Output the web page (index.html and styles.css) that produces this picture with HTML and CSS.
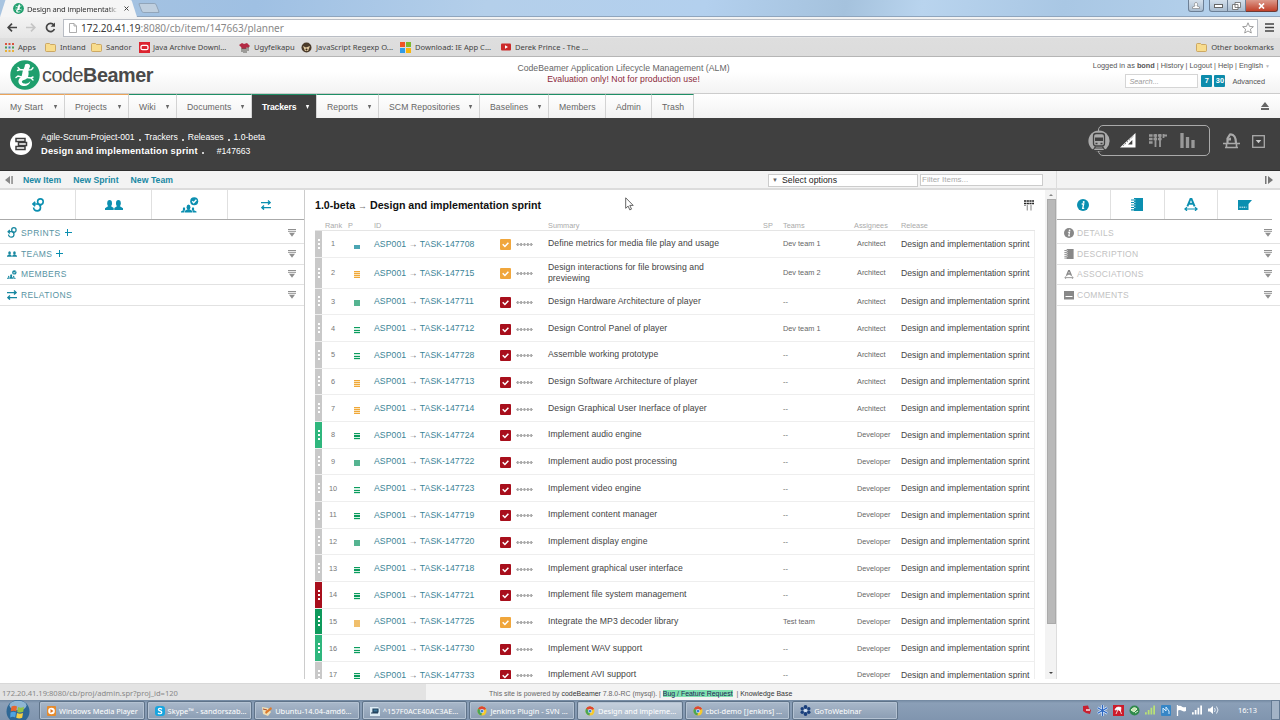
FILE: index.html
```html
<!DOCTYPE html>
<html lang="en">
<head>
    <meta charset="UTF-8">
    <meta name="viewport" content="width=device-width, initial-scale=1.0">
    <title>Design and implementation sprint - codeBeamer</title>
    <link rel="stylesheet" href="styles.css">
</head>
<body>
    <!-- shared icons -->
    <svg class="sprite" width="0" height="0">
        <symbol id="i-lizard" viewBox="0 0 30 30">
            <circle cx="15" cy="15" r="14.7" fill="#1f9f6d"/>
            <path d="M15 4.500c2-1.500 5-.5 5 1.500 0 2.500-2 3-1.500 6 .5 4-1 7-4.500 8-3 .8-2.500 3 0 3.500 3 .5 5-.5 6.500-2.500-1 4-4 5.500-7.500 5-5-.8-6-6-2.500-8.500 1.500-1.300 1.500-3 2-5.500.6-3 2.500-4.500 2.500-7.500z" fill="#fff"/>
            <path d="M14 10l-4-.5-2-2M10 9.500L7.500 10.500M18 10l3.500-.3L23 7.800M11.500 17L8 16l-2 1.500M17 17.500l4 .5 2 2M21 18l2-1" fill="none" stroke="#fff" stroke-width="1.400" stroke-linecap="round"/>
        </symbol>
        <symbol id="i-sprint" viewBox="0 0 12 14">
            <circle cx="8.400" cy="3.700" r="2.800" fill="none" stroke="currentColor" stroke-width="1.600"/>
            <path d="M.8 6h4.500c4 0 4.500 6.700 0 6.900-2.500 0-3.700-1.500-3.700-3.300M3.200 3.800L1 6l2.200 2.200M7.500 6.500l1.800 1.500" fill="none" stroke="currentColor" stroke-width="1.600"/>
        </symbol>
        <symbol id="i-team" viewBox="0 0 18 10">
            <g fill="currentColor"><ellipse cx="4.600" cy="3.200" rx="2.400" ry="3.200"/><path d="M0 10V8.200L3.400 6h2.400L8.700 8v2z"/><ellipse cx="13.400" cy="3.200" rx="2.400" ry="3.200"/><path d="M9.300 10V8l2.900-2h2.400L18 8.200V10z"/></g>
        </symbol>
        <symbol id="i-members" viewBox="0 0 18 16">
            <g fill="currentColor"><ellipse cx="7.500" cy="10.200" rx="1.900" ry="2.700"/><path d="M4 15.500v-1.700l2.500-1.600h2l2.500 1.600v1.700z"/><ellipse cx="3" cy="12" rx="1.200" ry="1.700"/><path d="M0 15.500v-1l2-1.200h1.500v2.200z"/><ellipse cx="12" cy="12" rx="1.200" ry="1.700"/><path d="M11.500 15.500v-2.200H13l2.500 1.200v1z"/></g>
            <circle cx="13.200" cy="4.200" r="4" fill="currentColor"/>
            <path d="M11.200 4.200l1.500 1.600 2.700-3" fill="none" stroke="#fff" stroke-width="1.300"/>
        </symbol>
        <symbol id="i-relations" viewBox="0 0 10 10">
            <path d="M0 2.600h9M7 .6l2.200 2L7 4.600M10 7.600H1M3 5.600L.8 7.600l2.200 2" fill="none" stroke="currentColor" stroke-width="1.400"/>
        </symbol>
        <symbol id="i-info" viewBox="0 0 12 12">
            <circle cx="6" cy="6" r="6" fill="currentColor"/>
            <circle cx="6.700" cy="2.900" r="1" fill="#fff"/>
            <path d="M4.700 5h2L5.700 9.300h1.500" fill="none" stroke="#fff" stroke-width="1.300"/>
        </symbol>
        <symbol id="i-book" viewBox="0 0 12 13">
            <path d="M3 0h9v13H3z" fill="currentColor"/>
            <path d="M0 2h4M0 4.500h4M0 7h4M0 9.500h4M0 11.800h4" stroke="currentColor" stroke-width="1.200"/>
            <path d="M3 1.900h1.500M3 4.400h1.500M3 6.900h1.500M3 9.400h1.500" stroke="#fff" stroke-width=".7"/>
        </symbol>
        <symbol id="i-assoc" viewBox="0 0 14 13">
            <path d="M3.400 8.300L6.500.9h1l3.100 7.400M4.600 5.800h4.800" fill="none" stroke="currentColor" stroke-width="1.900"/>
            <path d="M1.500 11h11M3 9.200L.8 11 3 12.800M11 9.200l2.200 1.800L11 12.800" fill="none" stroke="currentColor" stroke-width="1.200"/>
        </symbol>
        <symbol id="i-comment" viewBox="0 0 14 10">
            <path d="M0 0h14l-3.500 4V10H0z" fill="currentColor"/>
            <path d="M1.500 7.200h7" stroke="#fff" stroke-width="1" stroke-dasharray="1.300 .8"/>
        </symbol>
        <symbol id="i-note" viewBox="0 0 10 9">
            <path d="M0 0h10v8.500H0z" fill="currentColor"/><path d="M1.500 5.500h7" stroke="#fff"/>
        </symbol>
        <symbol id="i-collapse" viewBox="0 0 8 8">
            <path d="M0 .5h8M0 2.300h8" stroke="currentColor" stroke-width="1"/><path d="M1 3.800h6L4 7.700z" fill="currentColor"/>
        </symbol>
        <symbol id="i-check" viewBox="0 0 11 11">
            <rect width="11" height="11" rx="1" fill="currentColor"/><path d="M2.700 5.300L4.900 7.500 8.400 3.700" fill="none" stroke="#fff" stroke-width="1.500"/>
        </symbol>
        <symbol id="i-folder" viewBox="0 0 11 9">
            <path d="M.5 1.500q0-1 1-1h3l1 1h4q1 0 1 1v5q0 1-1 1h-8q-1 0-1-1z" fill="#f8dc8d" stroke="#c49a4e" stroke-width=".8"/>
        </symbol>
        <symbol id="i-chrome" viewBox="0 0 20 20">
            <circle cx="10" cy="10" r="9" fill="#f5c92e"/><path d="M10 10L2.200 5.500A9 9 0 0 1 18 6z" fill="#dc4735"/><path d="M10 10L2.200 5.500A9 9 0 0 0 9 19z" fill="#48a554"/>
            <path d="M9 6h9.100A9 9 0 0 0 2.200 5.500z" fill="#dc4735"/><circle cx="10" cy="10" r="4.200" fill="#fff"/><circle cx="10" cy="10" r="3.200" fill="#3f7fd6"/>
        </symbol>
        <symbol id="i-bars" viewBox="0 0 10 9">
            <path d="M0 8.500V6.500h1.600v2zM2.500 8.500v-4h1.600v4zM5 8.500v-6h1.600v6zM7.500 8.500v-8h1.600v8z" fill="currentColor"/>
        </symbol>
    </svg>

    <div class="browser">
        <div class="titlebar">
            <div class="tab">
                <svg width="11" height="11"><use href="#i-lizard"/></svg>
                <span class="tab-title">Design and implementatic</span>
                <svg width="5" height="5" viewBox="0 0 5 5"><path d="M.5.5l4 4M4.500.5l-4 4" stroke="#444"/></svg>
            </div>
            <div class="new-tab"></div>
            <div class="window-buttons">
                <span class="win-btn user"><svg width="8" height="7" viewBox="0 0 8 7"><path d="M.5 6.500V5L3 4C2 2 2.500.5 4 .5S6 2 5 4l2.500 1v1.500z" fill="#fff" stroke="#777" stroke-width=".6"/></svg></span>
                <span class="win-btn min"><svg width="9" height="4"><rect x=".5" y=".5" width="8" height="3" fill="#fff" stroke="#666"/></svg></span>
                <span class="win-btn max"><svg width="9" height="8" viewBox="0 0 9 8"><path d="M3 .5h5.500v5H3zM.5 2.500H6v5H.5z" fill="#fff" stroke="#666" stroke-width=".8"/></svg></span>
                <span class="win-btn close"><svg width="7" height="6" viewBox="0 0 7 6"><path d="M1 .5l5 5M6 .5l-5 5" stroke="#fff" stroke-width="1.700"/></svg></span>
            </div>
        </div>

        <div class="toolbar">
            <svg width="10" height="9" viewBox="0 0 10 9"><path d="M10 4.500H1.500M5 .7L1.200 4.500 5 8.300" fill="none" stroke="#444" stroke-width="1.700"/></svg>
            <svg width="10" height="9" viewBox="0 0 10 9"><path d="M0 4.500h8.500M5 .7l3.800 3.800L5 8.300" fill="none" stroke="#c5c5c5" stroke-width="1.700"/></svg>
            <svg width="11" height="11" viewBox="0 0 11 11"><path d="M8.800 3A4.100 4.100 0 1 0 9.400 7" fill="none" stroke="#444" stroke-width="1.700"/><path d="M10 .5v4.200H5.700z" fill="#444"/></svg>
            <div class="address">
                <svg width="8" height="10" viewBox="0 0 8 10"><path d="M.5.5h4.500l2.500 2.500v6.500h-7zM5 .5V3h2.500" fill="#fff" stroke="#999" stroke-width=".8"/></svg>
                <span class="url"><b>172.20.41.19</b>:8080/cb/item/147663/planner</span>
                <svg width="12" height="12" viewBox="0 0 12 12"><path d="M6 .8l1.500 3.600 3.900.3-3 2.500.9 3.800L6 9l-3.300 2 .9-3.800-3-2.500 3.900-.3z" fill="#fff" stroke="#888" stroke-width=".8"/></svg>
            </div>
            <svg width="9" height="9" viewBox="0 0 9 9"><path d="M0 1h9M0 4.500h9M0 8h9" stroke="#444" stroke-width="1.600"/></svg>
        </div>

        <div class="bookmarks">
            <div class="bookmark"><svg width="9" height="9" viewBox="0 0 9 9"><path d="M0 1h2M3.500 1h2M7 1h2" stroke="#d8523d" stroke-width="2"/><path d="M0 4.500h2M7 4.500h2" stroke="#4b9c57" stroke-width="2"/><path d="M3.500 4.500h2" stroke="#3f78c8" stroke-width="2"/><path d="M0 8h2M3.500 8h2M7 8h2" stroke="#e9b03a" stroke-width="2"/></svg>Apps</div>
            <div class="bookmark"><svg width="11" height="9"><use href="#i-folder"/></svg>Intland</div>
            <div class="bookmark"><svg width="11" height="9"><use href="#i-folder"/></svg>Sandor</div>
            <div class="bookmark"><svg width="11" height="11" viewBox="0 0 11 11"><rect width="11" height="11" fill="#dc2430"/><rect x="2" y="3.300" width="7" height="4.400" rx="1.500" fill="none" stroke="#fff" stroke-width="1.300"/></svg>Java Archive Downl...</div>
            <div class="bookmark"><svg width="11" height="11" viewBox="0 0 11 11"><path d="M0 3l3-2 2 1 3-1 3 3-2 2-1-1-1 2H3L2 5z" fill="#b32b45"/><path d="M3 6v4M5 6v5M7 6v5M9 5v4" stroke="#5d5a55"/></svg>Ugyfelkapu</div>
            <div class="bookmark"><svg width="11" height="11" viewBox="0 0 11 11"><circle cx="5.500" cy="5.500" r="5" fill="#4a3a2a"/><path d="M2 4l3 1.500L9 4 7 9H4z" fill="#e0c9a0"/><circle cx="5.500" cy="7.500" r="1" fill="#3a2a1a"/></svg>JavaScript Regexp O...</div>
            <div class="bookmark"><svg width="11" height="11" viewBox="0 0 11 11"><path d="M0 0h5v5H0z" fill="#f05325"/><path d="M6 0h5v5H6z" fill="#7eb72d"/><path d="M0 6h5v5H0z" fill="#2f9be8"/><path d="M6 6h5v5H6z" fill="#f7b50c"/></svg>Download: IE App C...</div>
            <div class="bookmark"><svg width="10" height="8" viewBox="0 0 10 8"><rect y=".5" width="10" height="7" rx="1" fill="#cc2a2a"/><path d="M4 2.300L7 4 4 5.700z" fill="#fff"/></svg>Derek Prince - The ...</div>
            <div class="bookmark other"><svg width="11" height="9"><use href="#i-folder"/></svg>Other bookmarks</div>
        </div>
    </div>

    <header class="header">
        <div class="logo">
            <svg width="30" height="30"><use href="#i-lizard"/></svg>
            <span class="logo-text">code<b>Beamer</b></span>
        </div>
        <div class="license">
            <div>CodeBeamer Application Lifecycle Management (ALM)</div>
            <div class="evaluation">Evaluation only! Not for production use!</div>
        </div>
        <div class="user-area">
            <div class="user-links">Logged in as <b>bond</b> | History | Logout | Help | English <i>▼</i></div>
            <div class="search-row">
                <div class="search-box">Search...</div>
                <span class="day">7</span>
                <span class="day">30</span>
                <span class="advanced">Advanced</span>
            </div>
        </div>
    </header>

    <nav class="nav">
        <div class="nav-item orange">My Start<i>▼</i></div>
        <div class="nav-item orange">Projects<i>▼</i></div>
        <div class="nav-item">Wiki<i>▼</i></div>
        <div class="nav-item">Documents<i>▼</i></div>
        <div class="nav-item active">Trackers<i>▼</i></div>
        <div class="nav-item">Reports<i>▼</i></div>
        <div class="nav-item">SCM Repositories<i>▼</i></div>
        <div class="nav-item">Baselines<i>▼</i></div>
        <div class="nav-item">Members</div>
        <div class="nav-item">Admin</div>
        <div class="nav-item">Trash</div>
        <svg class="eject" width="8" height="8" viewBox="0 0 8 8"><path d="M4 0l4 5H0zM0 6h8v2H0z" fill="#666"/></svg>
    </nav>

    <div class="titlebar-dark">
        <svg width="22" height="22" viewBox="0 0 22 22"><circle cx="11" cy="11" r="11" fill="#fff"/><path d="M6 5.500h9v3H6zM8.500 9.500h8v3h-8zM6 13.500h9v3H6z" fill="#fff" stroke="#3d3d3d" stroke-width="1.500"/></svg>
        <div class="crumbs">
            <div class="crumb-path">Agile-Scrum-Project-001<i></i>Trackers<i></i>Releases<i></i>1.0-beta</div>
            <div class="crumb-title"><b>Design and implementation sprint</b><i></i><span>#147663</span></div>
        </div>
        <div class="views">
            <svg class="train" width="22" height="22" viewBox="0 0 22 22"><circle cx="11" cy="11" r="10.600" fill="#aaa"/><rect x="5.500" y="3.500" width="11" height="12.500" rx="2.500" fill="#aaa" stroke="#404040" stroke-width="1.300"/><path d="M7 7.500h8v3.500H7z" fill="#404040"/><path d="M7.500 16.500L4 22M14.500 16.500L18 22M7 18h8M6 20.500h10" stroke="#404040" stroke-width="1.200"/><path d="M7.500 13.500h2M12.500 13.500h2" stroke="#404040" stroke-width="1.500"/></svg>
            <svg width="16" height="15" viewBox="0 0 16 15"><path d="M15.500 0v14.500H0z" fill="#fff"/><path d="M12.300 7v4.500H8z" fill="#404040"/><path d="M3.500 12.500L13.500 3" stroke="#404040" stroke-dasharray="1 1.500"/></svg>
            <svg width="18" height="13" viewBox="0 0 18 13"><path d="M0 1.500h13M0 5h13M0 8.500h4" stroke="#999" stroke-width="2.300" stroke-dasharray="3.600 .9"/><path d="M6.500 0v13M11 0v13M14 1.500h4M14.500 0v4" stroke="#999" stroke-width="1.800"/></svg>
            <svg width="15" height="15" viewBox="0 0 15 15"><path d="M2 0v15M7.500 4v11M13 7v8" stroke="#999" stroke-width="3.300"/></svg>
        </div>
        <svg class="stamp" width="17" height="16" viewBox="0 0 17 16"><path d="M4.500 10V5.500L7 1.500c4-.5 6 3 6 8.500" fill="none" stroke="#aaa" stroke-width="2.200"/><path d="M5 5.500l3-1v3H5z" fill="#aaa"/><path d="M0 10.500h17M2 14.500h13M3.500 11v4M13.500 11v4" stroke="#aaa" stroke-width="1.600"/></svg>
        <svg width="13" height="13" viewBox="0 0 13 13"><rect x=".7" y=".7" width="11.600" height="11.600" fill="none" stroke="#aaa" stroke-width="1.300"/><path d="M3.700 5h5.600L6.500 8.300z" fill="#ccc"/></svg>
    </div>

    <div class="actionbar">
        <svg width="8" height="8" viewBox="0 0 8 8"><path d="M5 0v8L0 4zM6.300 0h1.500v8H6.300z" fill="#888"/></svg>
        <a>New Item</a>
        <a>New Sprint</a>
        <a>New Team</a>
        <div class="select-box"><i>▼</i>Select options</div>
        <div class="filter-box">Filter Items...</div>
        <div class="right-toggle"><svg width="8" height="8" viewBox="0 0 8 8"><path d="M0 0h1.500v8H0zM3 0l5 4-5 4z" fill="#777"/></svg></div>
    </div>

    <main class="main">
        <aside class="left">
            <div class="icon-tabs">
                <span><svg width="12" height="14"><use href="#i-sprint"/></svg></span>
                <span><svg width="18" height="10"><use href="#i-team"/></svg></span>
                <span><svg width="18" height="16"><use href="#i-members"/></svg></span>
                <span><svg width="10" height="10"><use href="#i-relations"/></svg></span>
            </div>
            <div class="section"><svg width="10" height="11"><use href="#i-sprint"/></svg>SPRINTS<b class="plus"></b><svg class="toggle" width="8" height="8"><use href="#i-collapse"/></svg></div>
            <div class="section"><svg width="10" height="6"><use href="#i-team"/></svg>TEAMS<b class="plus"></b><svg class="toggle" width="8" height="8"><use href="#i-collapse"/></svg></div>
            <div class="section"><svg width="10" height="9"><use href="#i-members"/></svg>MEMBERS<svg class="toggle" width="8" height="8"><use href="#i-collapse"/></svg></div>
            <div class="section"><svg width="10" height="10"><use href="#i-relations"/></svg>RELATIONS<svg class="toggle" width="8" height="8"><use href="#i-collapse"/></svg></div>
        </aside>

        <section class="center">
            <div class="center-head">
                <h1>1.0-beta <span>→</span> Design and implementation sprint</h1>
                <svg width="10" height="11" viewBox="0 0 10 11"><path d="M0 1h10M0 3.500h10" stroke="#222" stroke-width="1.500" stroke-dasharray="2.200 .5"/><path d="M3.300 5v5.500M7 5v5.500M0 5.500h2" stroke="#999" stroke-width="1.200"/></svg>
            </div>
            <div class="row columns">
                <span></span><span>Rank</span><span>P</span><span>ID</span><span></span><span></span><span>Summary</span><span>SP</span><span>Teams</span><span>Assignees</span><span>Release</span>
            </div>
            <div class="rows" id="rows"></div>
        </section>

        <div class="scrollbar">
            <i class="up"></i>
            <div class="thumb"></div>
            <i class="down"></i>
        </div>

        <aside class="right">
            <div class="icon-tabs">
                <span><svg width="12" height="12"><use href="#i-info"/></svg></span>
                <span><svg width="12" height="13"><use href="#i-book"/></svg></span>
                <span><svg width="14" height="13"><use href="#i-assoc"/></svg></span>
                <span><svg width="14" height="10"><use href="#i-comment"/></svg></span>
            </div>
            <div class="section"><svg width="10" height="10"><use href="#i-info"/></svg>DETAILS<svg class="toggle" width="8" height="8"><use href="#i-collapse"/></svg></div>
            <div class="section"><svg width="10" height="10"><use href="#i-book"/></svg>DESCRIPTION<svg class="toggle" width="8" height="8"><use href="#i-collapse"/></svg></div>
            <div class="section"><svg width="10" height="9"><use href="#i-assoc"/></svg>ASSOCIATIONS<svg class="toggle" width="8" height="8"><use href="#i-collapse"/></svg></div>
            <div class="section"><svg width="10" height="9"><use href="#i-note"/></svg>COMMENTS<svg class="toggle" width="8" height="8"><use href="#i-collapse"/></svg></div>
        </aside>
    </main>

    <footer class="footer">
        <div class="status-url">172.20.41.19:8080/cb/proj/admin.spr?proj_id=120</div>
        <div class="powered">This site is powered by <b>codeBeamer</b> 7.8.0-RC (mysql). | <mark>Bug / Feature Request</mark> &nbsp;| <b>Knowledge Base</b></div>
    </footer>

    <div class="taskbar">
        <svg class="start" width="24" height="20" viewBox="0 0 24 20">
            <circle cx="12" cy="11.500" r="11.500" fill="#2e6795"/><ellipse cx="12" cy="5.500" rx="8.500" ry="4.800" fill="#8fb6d3"/>
            <path d="M5.500 6.500q3-1.500 5.500 0l-.8 5q-2.500-1.300-5.500 0z" fill="#e5672f"/><path d="M12 7q3 1.500 6-.3l-.8 5q-3 1.500-6 .2z" fill="#93c344"/><path d="M4.500 12.500q3-1.300 5.500 0l-.8 5q-2.500-1.300-5 0z" fill="#4fa3df"/><path d="M11 13q3 1.500 6 0l-.8 4.700q-3 1.500-6 0z" fill="#f6cf43"/>
        </svg>
        <div class="tasks">
            <div class="task"><svg width="9" height="10" viewBox="0 0 9 10"><rect width="9" height="10" rx="1" fill="#e58b2e"/><circle cx="4.500" cy="5" r="3.300" fill="#fff"/><path d="M3.500 3l3 2-3 2z" fill="#e0701a"/></svg>Windows Media Player</div>
            <div class="task"><svg width="10" height="10" viewBox="0 0 10 10"><rect width="10" height="10" rx="3" fill="#18a5df"/><path d="M7 3.300C6 2 3.200 2.200 3.400 3.700 3.600 5.100 6.800 4.700 6.800 6.300 6.800 8 4 8.200 3 6.800" fill="none" stroke="#fff" stroke-width="1.200"/></svg>Skype™ - sandorszab...</div>
            <div class="task"><svg width="10" height="10" viewBox="0 0 10 10"><path d="M0 1l6 1 3 4-3 4-5-2z" fill="#f0dfb5"/><path d="M3 6l6-5 1 2-6 5z" fill="#dc7a2c"/><path d="M1 3l4 1" stroke="#a84a28"/></svg>Ubuntu-14.04-amd6...</div>
            <div class="task"><svg width="10" height="10" viewBox="0 0 10 10"><path d="M0 1h8l2 2v7H0z" fill="#dcebf4"/><path d="M1 7h7M3 3h5v3H3z" stroke="#23435e" stroke-width="1.200" fill="#3b7598"/></svg>^157F0ACE40AC3AE...</div>
            <div class="task"><svg width="10" height="10"><use href="#i-chrome"/></svg>Jenkins Plugin - SVN ...</div>
            <div class="task current"><svg width="10" height="10"><use href="#i-chrome"/></svg>Design and impleme...</div>
            <div class="task"><svg width="10" height="10"><use href="#i-chrome"/></svg>cbci-demo [Jenkins] ...</div>
            <div class="task"><svg width="11" height="11" viewBox="0 0 11 11"><circle cx="5.500" cy="5.500" r="1.600" fill="#cfe0f5"/><g fill="#193f7d"><circle cx="5.500" cy="2" r="1.900"/><circle cx="5.500" cy="9" r="1.900"/><circle cx="2.200" cy="3.800" r="1.700"/><circle cx="8.800" cy="3.800" r="1.700"/><circle cx="2.200" cy="7.300" r="1.700"/><circle cx="8.800" cy="7.300" r="1.700"/></g></svg>GoToWebinar</div>
        </div>
        <div class="tray">
            <svg width="10" height="10" viewBox="0 0 10 10"><path d="M1 1l5-.5 1 3 2 1.500-1 4-4-1-3-2z" fill="#c9202f"/><path d="M4 5h4" stroke="#fff" stroke-width="1.300"/></svg>
            <svg width="11" height="11" viewBox="0 0 11 11"><path d="M5.500 0v11M.7 2.700l9.600 5.600M.7 8.300l9.600-5.600" stroke="#d6e8ff" stroke-width="2.600"/><path d="M5.500 0v11M.7 2.700l9.600 5.600M.7 8.300l9.600-5.600" stroke="#2d67c0" stroke-width="1.200"/></svg>
            <svg width="11" height="11" viewBox="0 0 11 11"><rect width="11" height="11" fill="#cc1c2b"/><path d="M2 5q1-4 6-2.500L7.500 6Q5 3.500 2 5zM5 4.500L3 9M7 5l1.500 4" fill="#fff" stroke="#fff" stroke-width=".8"/></svg>
            <svg width="11" height="11" viewBox="0 0 11 11"><circle cx="5.500" cy="5.500" r="5" fill="#2f8a4b"/><path d="M2 5q3-4 6-1L5 7zM6 8l3-2" fill="#c3e3b0" stroke="#dff2d0"/></svg>
            <svg class="green" width="11" height="10"><use href="#i-bars"/></svg>
            <svg width="10" height="11" viewBox="0 0 10 11"><rect width="10" height="11" rx="1" fill="#3686c6"/><path d="M2 8V3l3 3V2l3 4v3" fill="none" stroke="#d3ecff"/></svg>
            <svg width="11" height="11" viewBox="0 0 11 11"><path d="M1.500 0v11" stroke="#fff" stroke-width="1.300"/><path d="M2 1q3-1 4 .8 2 1 4 .2v4q-2 1-4-.2Q4 4.500 2 5.500z" fill="#fff"/></svg>
            <svg width="11" height="10"><use href="#i-bars"/></svg>
            <svg width="11" height="10" viewBox="0 0 11 10"><path d="M0 3.500h2L5 1v8L2 6.500H0z" fill="#fff"/><path d="M6.500 3q1.500 2 0 4M8.500 1.500q3 3.500 0 7" fill="none" stroke="#e4ecf5"/></svg>
            <span class="clock">16:13</span>
            <span class="show-desktop"></span>
        </div>
    </div>

    <svg class="cursor" width="9" height="14" viewBox="0 0 9 14"><path d="M.7.8v10.500l2.400-2.200 1.700 3.800 1.700-.8-1.700-3.700h3.400z" fill="#fff" stroke="#555" stroke-width=".9"/></svg>

    <script src="rows.js"></script>
</body>
</html>
```
FILE: styles.css
```css
* {
    box-sizing: border-box;
}

body {
    margin: 0;
    width: 1280px;
    height: 720px;
    overflow: hidden;
    display: flex;
    flex-direction: column;
    background: #fff;
    color: #444;
    font-family: "Liberation Sans", Arial, sans-serif;
    font-size: 8.67px;
    position: relative;
}

svg {
    display: block;
    flex: none;
}

i {
    font-style: normal;
}

.sprite {
    position: absolute;
}

/* browser window */
.browser {
    height: 57px;
    flex: none;
    font-family: "Noto Sans", "Open Sans", sans-serif;
    background: linear-gradient(#ececec, #dedede 38px, #dcdcdc);
    border-bottom: 1px solid #b5b5b5;
}

.titlebar {
    height: 17px;
    display: flex;
    background: linear-gradient(100deg, #a8c4e0 0, #9fc0e3 20%, #b4cfea 38%, #b3d0ee 55%, #a5c2dd 66%, #b9d4ee 72%, #a9c7e4 83%, #b8d4ee 100%);
    border-bottom: 1px solid #8fa5bd;
}

.tab {
    width: 137px;
    height: 17px;
    padding: 0 8px 0 13px;
    display: flex;
    align-items: center;
    background: #f5f5f5;
    border-radius: 3px 7px 0 0;
    clip-path: polygon(4% 0, 96% 0, 100% 100%, 0 100%);
    font-size: 7.6px;
    color: #333;
}

.tab-title {
    width: 92px;
    margin-left: 3px;
    margin-right: 5px;
    white-space: nowrap;
    letter-spacing: -0.18px;
    mask-image: linear-gradient(90deg, #000 88%, transparent);
}

.new-tab {
    width: 18px;
    height: 10px;
    margin: 3px 0 0 3px;
    background: #bfcfdf;
    border: 1px solid #91a5ba;
    border-radius: 2px;
    transform: skewX(22deg);
}

.window-buttons {
    margin-left: auto;
    margin-right: 2px;
    display: flex;
    height: 12px;
}

.win-btn {
    display: flex;
    align-items: center;
    justify-content: center;
    background: linear-gradient(#d4e0ec, #a9bccf);
    border: 1px solid #6d8096;
    border-top: 0;
}

.win-btn.user {
    width: 16px;
    margin-right: 5px;
    border-radius: 0 0 3px 3px;
}

.win-btn.min {
    width: 19px;
    border-radius: 0 0 0 3px;
}

.win-btn.max {
    width: 18px;
    border-left: 0;
}

.win-btn.close {
    width: 32px;
    border-left: 0;
    border-radius: 0 0 3px 0;
    background: linear-gradient(#dc9a8c, #c2412a);
    border-color: #6d3a35;
}

.toolbar {
    height: 21px;
    padding: 0 6px 0 7px;
    display: flex;
    align-items: center;
    background: linear-gradient(#f3f3f3, #e6e6e6);
}

.toolbar > svg + svg {
    margin-left: 9px;
}

.toolbar > .address {
    flex: 1;
    height: 18px;
    margin: 0 7px 0 7px;
    padding: 0 3px 0 5px;
    display: flex;
    align-items: center;
    background: #fff;
    border: 1px solid #b9bdc4;
}

.url {
    flex: 1;
    margin-left: 4px;
    font-size: 10px;
    color: #888;
}

.url b {
    font-weight: normal;
    color: #3a3a3a;
}

.bookmarks {
    height: 18px;
    padding-left: 5px;
    display: grid;
    grid-template-columns: 40px 46px 48px 100px 62px 99px 101px 120px 1fr;
    align-items: center;
    font-size: 7.6px;
    color: #444;
}

.bookmark {
    display: flex;
    align-items: center;
    gap: 4px;
    white-space: nowrap;
}

.bookmark:nth-child(4) {
    padding-left: 0;
    gap: 3px;
}

.bookmark.other {
    justify-content: flex-end;
    padding-right: 6px;
}

/* header */
.header {
    height: 37px;
    flex: none;
    padding: 3px 0 0 10px;
    display: grid;
    grid-template-columns: 185px 1fr 228px;
    background: linear-gradient(#fff 40%, #f3f3f3);
    border-bottom: 1px solid #ccc;
}

.logo {
    display: flex;
    align-items: center;
    height: 30px;
    gap: 2px;
}

.logo-text {
    font-size: 19.8px;
    letter-spacing: -0.45px;
    color: #4a4a4a;
}

.license {
    padding-top: 3px;
    text-align: center;
    line-height: 10.67px;
    letter-spacing: 0.04px;
    color: #666;
}

.evaluation {
    color: #8c2a3a;
}

.user-area {
    padding: 0 12px 0 0;
    font-size: 7.33px;
    color: #555;
}

.user-links {
    height: 11px;
    line-height: 11px;
    text-align: right;
    white-space: nowrap;
    margin-right: -2px;
}

.user-links i {
    font-size: 5px;
    color: #bbb;
}

.search-row {
    margin-top: 3px;
    display: flex;
    align-items: center;
    justify-content: flex-end;
}

.search-box {
    width: 73px;
    height: 14px;
    margin-right: 3px;
    padding-left: 3px;
    background: #fff;
    border: 1px solid #d5d5d5;
    line-height: 13px;
    font-style: italic;
    color: #999;
}

.day {
    width: 11px;
    height: 12px;
    margin-right: 2px;
    background: #0d8bab;
    border-radius: 1px;
    color: #fff;
    font-weight: bold;
    line-height: 12px;
    text-align: center;
}

.advanced {
    margin-left: 5px;
    margin-right: 3px;
}

/* main menu */
.nav {
    height: 24px;
    flex: none;
    display: grid;
    grid-template-columns: 65px 64px 48px 75px 65px 62px 101px 69px 57px 46px 42px 1fr;
    background: linear-gradient(#fff, #f2f2f2);
}

.nav-item {
    padding: 0 5px 0 10px;
    display: flex;
    align-items: center;
    justify-content: space-between;
    border-top: 1px solid #1e8f66;
    border-right: 1px solid #d3d3d3;
    letter-spacing: 0.08px;
    color: #666;
    white-space: nowrap;
}

.nav-item.orange {
    border-top-color: #eaa45a;
}

.nav-item i {
    font-size: 7px;
    transform: scaleX(0.8);
}

.nav-item.active {
    background: #404040;
    color: #fff;
    font-weight: bold;
    letter-spacing: -0.15px;
}

.eject {
    align-self: center;
    justify-self: end;
    margin-right: 11px;
}

/* tracker title */
.titlebar-dark {
    height: 53px;
    flex: none;
    padding: 0 15px 0 10px;
    display: flex;
    align-items: center;
    background: #404040;
    border-bottom: 1px solid #2e2e2e;
    color: #fff;
}

.crumbs {
    flex: 1;
    margin-left: 9px;
    padding-top: 2px;
    line-height: 13.7px;
}

.crumb-path,
.crumb-title {
    display: flex;
    align-items: center;
}

.crumb-path {
    letter-spacing: -0.03px;
}

.crumb-title b {
    font-size: 9.33px;
    letter-spacing: 0.2px;
}

.crumbs i {
    width: 2px;
    height: 2px;
    margin: 3px 4px 0;
    background: #ccc;
}

.crumb-title span {
    margin-left: 9px;
}

.views {
    width: 112px;
    height: 31px;
    margin-right: 13px;
    margin-top: -7px;
    padding-right: 14px;
    display: flex;
    align-items: center;
    justify-content: space-between;
    border: 1px solid #aaa;
    border-radius: 5px;
}

.train {
    margin-left: -11px;
    margin-right: -3px;
}

.stamp {
    margin-right: 12px;
    margin-top: -7px;
}

.titlebar-dark > svg:last-child {
    margin-top: -5px;
}

/* actions */
.actionbar {
    height: 19px;
    flex: none;
    padding-left: 5px;
    display: flex;
    align-items: center;
    background: #f3f3f3;
    border-bottom: 2px solid #dcdcdc;
}

.actionbar a {
    margin-left: 12px;
    font-weight: bold;
    color: #1a88a3;
    letter-spacing: 0.02px;
}

.actionbar svg + a {
    margin-left: 10px;
}

.select-box {
    width: 150px;
    height: 13px;
    margin-top: 1px;
    margin-left: auto;
    padding-left: 3px;
    display: flex;
    align-items: center;
    background: #fff;
    border: 1px solid #ccc;
    color: #222;
    letter-spacing: 0.05px;
}

.select-box i {
    width: 10px;
    font-size: 6px;
    color: #666;
}

.filter-box {
    width: 123px;
    height: 12px;
    margin-top: 1px;
    margin-left: 2px;
    margin-right: 13px;
    padding-left: 1px;
    background: #fff;
    border: 1px solid #ccc;
    line-height: 10px;
    font-size: 8px;
    color: #aaa;
}

.right-toggle {
    width: 224px;
    height: 17px;
    padding-right: 7px;
    display: flex;
    align-items: center;
    justify-content: flex-end;
    border-left: 1px solid #ddd;
}

/* planner */
.main {
    height: 493px;
    flex: none;
    padding-bottom: 4px;
    display: flex;
}

.left {
    width: 305px;
    border-right: 1px solid #ccc;
}

.right {
    width: 224px;
    border-left: 1px solid #ddd;
}

.icon-tabs {
    height: 30px;
    margin-bottom: 3px;
    display: grid;
    grid-template-columns: repeat(4, 1fr);
    border-bottom: 1px solid #aaa;
    color: #0b8fb0;
}

.right .icon-tabs {
    width: 215px;
}

.icon-tabs span {
    display: flex;
    align-items: center;
    justify-content: center;
    border-right: 1px solid #e0e0e0;
}

.icon-tabs span:last-child {
    border-right: 0;
}

.section {
    height: 20.75px;
    padding: 0 8px 0 7px;
    display: flex;
    align-items: center;
    border-bottom: 1px solid #e2e2e2;
    font-size: 8.5px;
    color: #5793a3;
    letter-spacing: 0.4px;
}

.section svg:first-child {
    margin-right: 4px;
    color: #1787a0;
}

.right .section {
    color: #c2c2c2;
    letter-spacing: 0.3px;
}

.right .section svg:first-child {
    margin-right: 3px;
    color: #888;
}

.section .toggle {
    margin-left: auto;
    color: #8f8f8f;
}

.plus {
    width: 7px;
    height: 7px;
    margin-left: 4px;
    background: linear-gradient(#0b8fb0, #0b8fb0) center / 7px 1.4px no-repeat, linear-gradient(#0b8fb0, #0b8fb0) center / 1.4px 7px no-repeat;
}

.center {
    width: 740px;
    padding: 0 9px 0 10px;
    overflow: hidden;
}

.center-head {
    height: 30px;
    margin-bottom: 1px;
    padding-right: 2px;
    display: flex;
    align-items: center;
    justify-content: space-between;
}

.center-head h1 {
    margin: 0;
    font-size: 10.67px;
    color: #111;
    letter-spacing: -0.02px;
}

.center-head h1 span {
    font-weight: normal;
    font-size: 9px;
    color: #777;
}

.row {
    display: grid;
    grid-template-columns: 7px 22px 30px 126px 16px 32px 215px 20px 71px 47px 133px;
    align-items: center;
    height: 26.67px;
    width: 720px;
    border-bottom: 1px solid #eee;
    border-right: 1px solid #eee;
}

.row.tall {
    height: 31px;
}

.row.columns {
    height: 10px;
    border-color: #e5e5e5;
    border-right: 0;
    font-size: 7.33px;
    color: #aaa;
    line-height: 10px;
}

.row.columns span:nth-child(2) {
    padding-left: 3px;
}

.row.columns span:nth-child(3) {
    padding-left: 4px;
}

.row.columns span {
    white-space: nowrap;
}

.handle {
    align-self: stretch;
    display: flex;
    flex-direction: column;
    align-items: center;
    justify-content: center;
    gap: 2px;
    background: #c9c9c9;
}

.handle i {
    width: 2px;
    height: 2px;
    background: #fff;
}

.handle.mint { background: #2fb67d; }
.handle.green { background: #0e9a5c; }
.handle.red { background: #a80f1c; }

.rank {
    text-align: center;
    font-size: 7.33px;
    color: #777;
}

.priority {
    width: 6px;
    height: 7px;
    margin: 4px 0 0 10px;
    background: repeating-linear-gradient(#0b9c5e 0 1.4px, #d5f0e3 1.4px 2.5px);
}

.priority.orange { background: repeating-linear-gradient(#f0a838 0 1px, #fbe3b8 1px 2px); }
.priority.tan { background: #f0bf6c; }
.priority.teal { background: #55b491; height: 6px; }
.priority.blue { background: #4ba5b3; height: 4px; margin-top: 7px; }

.task-id {
    color: #3b8496;
    letter-spacing: 0.08px;
    white-space: nowrap;
}

.task-id i {
    color: #777;
}

.status {
    color: #a80f1c;
    margin-top: 2px;
}

.status.waiting {
    color: #f0a63c;
}

.stars {
    width: 17px;
    height: 3px;
    margin-top: 2px;
    background: radial-gradient(circle, #aaa 1.2px, transparent 1.6px) 0 0 / 3.4px 3px;
}

.summary {
    width: 180px;
    padding-right: 8px;
    line-height: 11px;
    letter-spacing: 0.06px;
}

.team,
.assignee {
    font-size: 7.33px;
    color: #666;
}

.row .assignee {
    padding-left: 3px;
}

.release {
    white-space: nowrap;
}

.scrollbar {
    width: 11px;
    padding: 2px 0 3px 1px;
    display: flex;
    flex-direction: column;
    align-items: center;
    background: #f3f3f3;
}

.scrollbar .thumb {
    width: 9px;
    height: 425px;
    margin-top: 3px;
    background: #b9b9b9;
    border: 1px solid #aaa;
}

.scrollbar i {
    border: 2.5px solid transparent;
}

.scrollbar .up {
    border-bottom-color: #888;
}

.scrollbar .down {
    margin-top: auto;
    border-top-color: #444;
}

/* footer */
.footer {
    height: 17px;
    flex: none;
    display: flex;
    background: #f3f3f3;
    border-top: 1px solid #d8d8d8;
}

.status-url {
    width: 426px;
    padding-left: 2px;
    background: #e3e3e3;
    font: 7.57px/18px "Noto Sans", sans-serif;
    color: #888;
}

.powered {
    margin-left: 63px;
    font-size: 6.95px;
    line-height: 19px;
    color: #666;
    white-space: nowrap;
}

.powered b {
    font-weight: normal;
    color: #333;
}

.powered mark {
    background: #7fe0b0;
    color: #225;
}

/* windows taskbar */
.taskbar {
    height: 20px;
    flex: none;
    padding-left: 6px;
    display: flex;
    background: linear-gradient(#7187a0, #8b9fb7 3px, #8095af);
    font-family: "Noto Sans", "Open Sans", sans-serif;
    font-size: 7.45px;
    color: #fff;
}

.tasks {
    margin-left: 9px;
    padding-top: 1px;
    display: grid;
    grid-template-columns: repeat(8, 105.6px);
    gap: 2px;
}

.task {
    padding-left: 7px;
    display: flex;
    align-items: center;
    gap: 3px;
    white-space: nowrap;
    background: linear-gradient(#a9b8ca, #8b9db3);
    border: 1px solid #5f7389;
    border-radius: 2px;
    box-shadow: inset 0 0 0 1px #b4c2d2;
}

.task.current {
    background: linear-gradient(#c5d0dd, #aab9ca);
}

.tray {
    margin-left: auto;
    display: flex;
    align-items: center;
    gap: 5px;
}

.tray .green {
    color: #b9e276;
}

.clock {
    margin-left: 14px;
    margin-right: 9px;
}

.show-desktop {
    width: 9px;
    height: 20px;
    background: #a3b3c6;
    border: 1px solid #647a93;
}

.cursor {
    position: absolute;
    left: 625px;
    top: 197px;
}
```
FILE: rows.js
```js
// [id, priority, summary, team, assignee, handle colour, waiting]
const tasks = [
    ['147708', 'blue', 'Define metrics for media file play and usage', 'Dev team 1', 'Architect', '', true],
    ['147715', 'orange', 'Design interactions for file browsing and previewing', 'Dev team 2', 'Architect', '', true],
    ['147711', 'teal', 'Design Hardware Architecture of player', '--', 'Architect', ''],
    ['147712', '', 'Design Control Panel of player', 'Dev team 1', 'Architect', ''],
    ['147728', '', 'Assemble working prototype', '--', 'Architect', ''],
    ['147713', 'orange', 'Design Software Architecture of player', '--', 'Architect', ''],
    ['147714', 'orange', 'Design Graphical User Inerface of player', '--', 'Architect', ''],
    ['147724', '', 'Implement audio engine', '--', 'Developer', 'mint'],
    ['147722', 'teal', 'Implement audio post processing', '--', 'Developer', ''],
    ['147723', '', 'Implement video engine', '--', 'Developer', ''],
    ['147719', '', 'Implement content manager', '--', 'Developer', ''],
    ['147720', 'teal', 'Implement display engine', '--', 'Developer', ''],
    ['147718', '', 'Implement graphical user interface', '--', 'Developer', ''],
    ['147721', '', 'Implement file system management', '--', 'Developer', 'red'],
    ['147725', 'tan', 'Integrate the MP3 decoder library', 'Test team', 'Developer', 'green', true],
    ['147730', '', 'Implement WAV support', '--', 'Developer', 'mint'],
    ['147733', '', 'Implement AVI support', '--', 'Developer', '']
];

document.getElementById('rows').innerHTML = tasks.map((task, index) => {
    const [id, priority, summary, team, assignee, handle, waiting] = task;
    return `
        <div class="row ${summary.length > 50 ? 'tall' : ''}">
            <span class="handle ${handle}"><i></i><i></i><i></i></span>
            <span class="rank">${index + 1}</span>
            <span class="priority ${priority}"></span>
            <span class="task-id">ASP001 <i>→</i> TASK-${id}</span>
            <span class="status ${waiting ? 'waiting' : ''}"><svg width="11" height="11"><use href="#i-check"/></svg></span>
            <span class="stars"></span>
            <span class="summary">${summary}</span>
            <span></span>
            <span class="team">${team}</span>
            <span class="assignee">${assignee}</span>
            <span class="release">Design and implementation sprint</span>
        </div>`;
}).join('');
```
